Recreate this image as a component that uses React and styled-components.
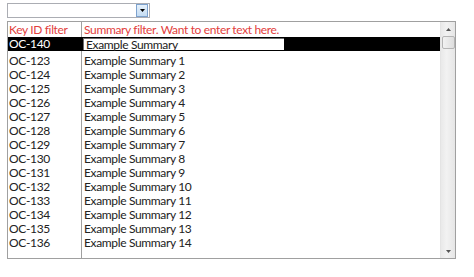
import React from 'react';
import styled, { createGlobalStyle } from 'styled-components';

const GlobalStyle = createGlobalStyle`
  html, body {
    margin: 0;
    padding: 0;
    background: #ffffff;
  }
  body {
    font-family: "Lato", "Liberation Sans", sans-serif;
    font-size: 12px;
    letter-spacing: -0.35px;
    color: #222222;
  }
`;

const rows = [
  ['OC-123', 'Example Summary 1'],
  ['OC-124', 'Example Summary 2'],
  ['OC-125', 'Example Summary 3'],
  ['OC-126', 'Example Summary 4'],
  ['OC-127', 'Example Summary 5'],
  ['OC-128', 'Example Summary 6'],
  ['OC-129', 'Example Summary 7'],
  ['OC-130', 'Example Summary 8'],
  ['OC-131', 'Example Summary 9'],
  ['OC-132', 'Example Summary 10'],
  ['OC-133', 'Example Summary 11'],
  ['OC-134', 'Example Summary 12'],
  ['OC-135', 'Example Summary 13'],
  ['OC-136', 'Example Summary 14'],
];

const Page = styled.div`
  padding: 3px 0 0 7px;
  display: flex;
  flex-direction: column;
  gap: 3px;
`;

const Combo = styled.div`
  width: 140px;
  height: 13px;
  border: 1px solid #abadb3;
  display: flex;
  justify-content: flex-end;
  align-items: stretch;
  padding: 0 1px 0 0;
`;

const ComboButton = styled.div`
  width: 10px;
  border: 1px solid #7da2ce;
  background: linear-gradient(#e6f1fb, #c4dcf3);
  display: flex;
  align-items: center;
  justify-content: center;
`;

const ListBox = styled.div`
  width: 447px;
  height: 236px;
  border: 1px solid #a0a0a0;
  display: flex;
`;

const Body = styled.div`
  flex: 1;
  display: flex;
  flex-direction: column;
`;

const Row = styled.div`
  display: grid;
  grid-template-columns: 73px 1fr;
  height: ${p => p.$h || 14}px;
  line-height: ${p => p.$h || 14}px;
  background: ${p => (p.$selected ? '#000' : 'transparent')};
  color: ${p => (p.$selected ? '#fff' : p.$head ? '#e2403d' : '#222')};
`;

const KeyCell = styled.div`
  padding-left: 1px;
  white-space: nowrap;
  overflow: hidden;
`;

const SummaryCell = styled.div`
  border-left: 1px solid ${p => (p.$selected ? '#000' : '#a0a0a0')};
  padding-left: ${p => (p.$selected ? 0 : 2)}px;
  white-space: nowrap;
  overflow: hidden;
  display: flex;
  align-items: center;
`;

const Spacer = styled.div`
  display: grid;
  grid-template-columns: 73px 1fr;
  height: ${p => p.$h}px;
  flex: ${p => (p.$fill ? 1 : 'none')};
`;

const SpacerCell = styled.div`
  border-left: 1px solid #a0a0a0;
`;

const EditBox = styled.div`
  width: 198px;
  height: 11px;
  margin-left: 1px;
  background: #fff;
  color: #222;
  border-top: 1px solid #6d6d6d;
  border-left: 1px solid #6d6d6d;
  line-height: 11px;
  padding-left: 2px;
  box-sizing: content-box;
`;

const Scrollbar = styled.div`
  width: 14px;
  border-left: 1px solid #e4e4e4;
  background: linear-gradient(90deg, #e9e9e9, #f2f2f2 40%, #e6e6e6);
  display: flex;
  flex-direction: column;
  align-items: center;
`;

const Arrow = styled.div`
  height: 14px;
  width: 100%;
  display: flex;
  align-items: center;
  justify-content: center;
`;

const Thumb = styled.div`
  width: 11px;
  height: 11px;
  border: 1px solid #b5b5b5;
  border-radius: 2px;
  background: linear-gradient(90deg, #f2f2f2, #dedede);
`;

const Track = styled.div`
  flex: 1;
`;

const Tri = ({ up, color = '#555', size = 5 }) => (
  <svg width={size} height={3} viewBox="0 0 5 3">
    <path d={up ? 'M2.5 0 L5 3 L0 3 Z' : 'M0 0 L5 0 L2.5 3 Z'} fill={color} />
  </svg>
);

export default function App() {
  return (
    <Page>
      <GlobalStyle />
      <Combo>
        <ComboButton>
          <Tri color="#000" />
        </ComboButton>
      </Combo>
      <ListBox>
        <Body>
          <Row $head $h={15}>
            <KeyCell>Key ID filter</KeyCell>
            <SummaryCell>Summary filter. Want to enter text here.</SummaryCell>
          </Row>
          <Row $selected>
            <KeyCell>OC-140</KeyCell>
            <SummaryCell $selected>
              <EditBox>Example Summary</EditBox>
            </SummaryCell>
          </Row>
          <Spacer $h={3}>
            <div />
            <SpacerCell />
          </Spacer>
          {rows.map(([key, summary]) => (
            <Row key={key}>
              <KeyCell>{key}</KeyCell>
              <SummaryCell>{summary}</SummaryCell>
            </Row>
          ))}
          <Spacer $fill>
            <div />
            <SpacerCell />
          </Spacer>
        </Body>
        <Scrollbar>
          <Arrow><Tri up /></Arrow>
          <Thumb />
          <Track />
          <Arrow><Tri /></Arrow>
        </Scrollbar>
      </ListBox>
    </Page>
  );
}
